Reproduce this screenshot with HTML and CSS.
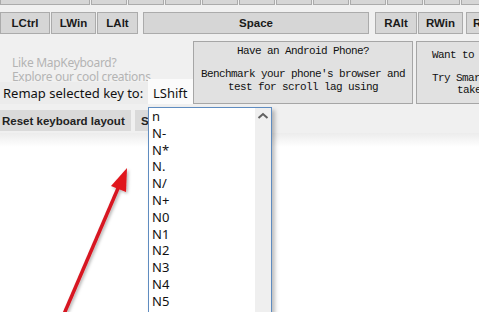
FILE: index.html
```html
<!DOCTYPE html>
<html lang="en">
<head>
    <meta charset="UTF-8">
    <meta name="viewport" content="width=device-width, initial-scale=1.0">
    <title>MapKeyboard</title>
    <link rel="stylesheet" href="styles.css">
</head>
<body>
    <div id="app">
        <div class="keyrow top">
            <div class="key wide"></div>
            <div class="key"></div>
            <div class="key"></div>
            <div class="key"></div>
            <div class="key"></div>
            <div class="key"></div>
            <div class="key"></div>
            <div class="key"></div>
            <div class="key"></div>
            <div class="key"></div>
            <div class="key"></div>
            <div class="key"></div>
        </div>

        <div class="keyrow bottom">
            <div class="key k-lctrl">LCtrl</div>
            <div class="key k-lwin">LWin</div>
            <div class="key k-lalt">LAlt</div>
            <div class="key k-space">Space</div>
            <div class="key k-ralt">RAlt</div>
            <div class="key k-rwin">RWin</div>
            <div class="key k-rmenu">RMenu</div>
        </div>

        <div class="middle">
            <div class="leftcol">
                <div class="promo">
                    <div>Like MapKeyboard?</div>
                    <div>Explore our cool creations</div>
                </div>
                <div class="remap">
                    <span class="remap-label">Remap selected key to:</span>
                    <span class="remap-value">LShift</span>
                </div>
            </div>
            <div class="adbox">
                <p>Have an Android Phone?</p>
                <p class="gap">Benchmark your phone's browser and<br>test for scroll lag using</p>
            </div>
            <div class="adbox second">
                <p>Want to test your typing speed?</p>
                <p class="gap">Try SmartType.<br><span class="indent">take</span></p>
            </div>
        </div>

        <div class="actions">
            <button class="btn reset">Reset keyboard layout</button>
            <button class="btn save">Save</button>
        </div>
        <div class="fade"></div>

        <div class="dropdown">
            <ul>
                <li>n</li>
                <li>N-</li>
                <li>N*</li>
                <li>N.</li>
                <li>N/</li>
                <li>N+</li>
                <li>N0</li>
                <li>N1</li>
                <li>N2</li>
                <li>N3</li>
                <li>N4</li>
                <li>N5</li>
                <li>N6</li>
            </ul>
            <div class="scrollbar">
                <svg width="16" height="10" viewBox="0 0 16 10">
                    <polyline points="3.5,7 8,3 12.5,7" fill="none" stroke="#606060" stroke-width="2"/>
                </svg>
            </div>
        </div>

        <svg class="arrow" width="479" height="312" viewBox="0 0 479 312">
            <defs>
                <filter id="shadow" x="-20%" y="-20%" width="140%" height="140%">
                    <feDropShadow dx="1.5" dy="1.5" stdDeviation="1.5" flood-color="#000" flood-opacity="0.3"/>
                </filter>
            </defs>
            <g filter="url(#shadow)">
                <line x1="64" y1="314" x2="119" y2="186" stroke="#d71920" stroke-width="3.5"/>
                <polygon points="127,168 126,192 111,186" fill="#e0141c"/>
            </g>
        </svg>
    </div>
</body>
</html>
```

FILE: styles.css
```css
body {
    margin: 0;
    background: #ffffff;
    font-family: "Noto Sans", "Open Sans", sans-serif;
    overflow: hidden;
}

#app {
    position: relative;
    width: 479px;
    height: 312px;
    overflow: hidden;
}

.keyrow {
    display: flex;
    background: #f0f0f0;
}

.keyrow.top {
    height: 12px;
    align-items: flex-end;
}

.keyrow.top .key {
    height: 22px;
    width: 36px;
    margin-left: 1px;
    margin-bottom: 7px;
    flex: none;
}

.keyrow.top .key.wide {
    width: 90px;
    margin-left: 0;
}

.keyrow.bottom {
    height: 29px;
}

.key {
    box-sizing: border-box;
    height: 22px;
    background: #d6d6d6;
    border: 1px solid #ababab;
    font-family: "Liberation Sans", Arial, sans-serif;
    font-weight: bold;
    font-size: 11.5px;
    color: #1a1a1a;
    display: flex;
    align-items: center;
    justify-content: center;
    flex: none;
    overflow: hidden;
}

.k-lctrl { width: 50px; }
.k-lwin { width: 45px; margin-left: 1px; }
.k-lalt { width: 41px; margin-left: 1px; }
.k-space { width: 226px; margin-left: 5px; }
.k-ralt { width: 42px; margin-left: 6px; }
.k-rwin { width: 45px; margin-left: 1px; }
.k-rmenu { width: 50px; margin-left: 3px; justify-content: flex-start; padding-left: 6px; }

.middle {
    display: flex;
    background: #f0f0f0;
    height: 66px;
}

.leftcol {
    width: 193px;
    flex: none;
    display: flex;
    flex-direction: column;
}

.promo {
    height: 41px;
    overflow: hidden;
    padding-left: 12px;
    box-sizing: border-box;
    padding-top: 15px;
    color: #b4b4b4;
    font-size: 12px;
    letter-spacing: -0.3px;
    line-height: 14px;
    white-space: nowrap;
}

.remap {
    display: flex;
    align-items: center;
    height: 22px;
    background: #ececec;
    font-size: 13px;
    color: #111;
}

.remap-label {
    padding-left: 3px;
    width: 145px;
    flex: none;
}

.remap-value {
    align-self: stretch;
    display: flex;
    align-items: center;
    flex: 1;
    background: #fbfbfb;
    padding-left: 5px;
    margin-top: -3px;
    padding-top: 3px;
}

.adbox {
    box-sizing: border-box;
    width: 220px;
    height: 63px;
    flex: none;
    background: #e1e1e1;
    border: 1px solid #a6a6a6;
    font-family: "Liberation Mono", monospace;
    font-size: 11px;
    letter-spacing: -0.6px;
    line-height: 13px;
    color: #111;
    text-align: center;
    padding-top: 3px;
}

.adbox p {
    margin: 0;
}

.adbox .gap {
    margin-top: 10px;
}

.adbox.second {
    margin-left: 3px;
    text-align: left;
    padding-left: 15px;
    padding-top: 7px;
    white-space: nowrap;
}

.adbox.second .gap {
    margin-top: 10px;
    line-height: 12px;
}

.adbox .indent {
    padding-left: 25px;
}

.actions {
    display: flex;
    background: #f0f0f0;
    height: 26px;
    padding-top: 3px;
    box-sizing: border-box;
}

.btn {
    height: 21px;
    border: none;
    background: #dadada;
    font-family: "Liberation Sans", Arial, sans-serif;
    font-weight: bold;
    font-size: 11.5px;
    color: #222;
    padding: 0 0 0 2px;
    text-align: left;
    white-space: nowrap;
    overflow: hidden;
}

.btn.reset {
    width: 131px;
}

.btn.save {
    margin-left: 4px;
    width: 40px;
    padding-left: 6px;
}

.fade {
    height: 14px;
    background: linear-gradient(#ececec, #ffffff);
}

.dropdown {
    position: absolute;
    left: 148px;
    top: 107px;
    width: 124px;
    height: 230px;
    box-sizing: border-box;
    border: 1px solid #5f8cc0;
    background: #ffffff;
    box-shadow: 3px 3px 4px rgba(0, 0, 0, 0.25);
    display: flex;
}

.dropdown ul {
    list-style: none;
    margin: 0;
    padding: 0 0 0 3px;
    flex: 1;
    font-size: 13px;
    line-height: 16.8px;
    color: #111;
}

.scrollbar {
    width: 16px;
    background: #efefef;
    padding-top: 3px;
}

.scrollbar svg {
    display: block;
}

.arrow {
    position: absolute;
    left: 0;
    top: 0;
    pointer-events: none;
}
```
